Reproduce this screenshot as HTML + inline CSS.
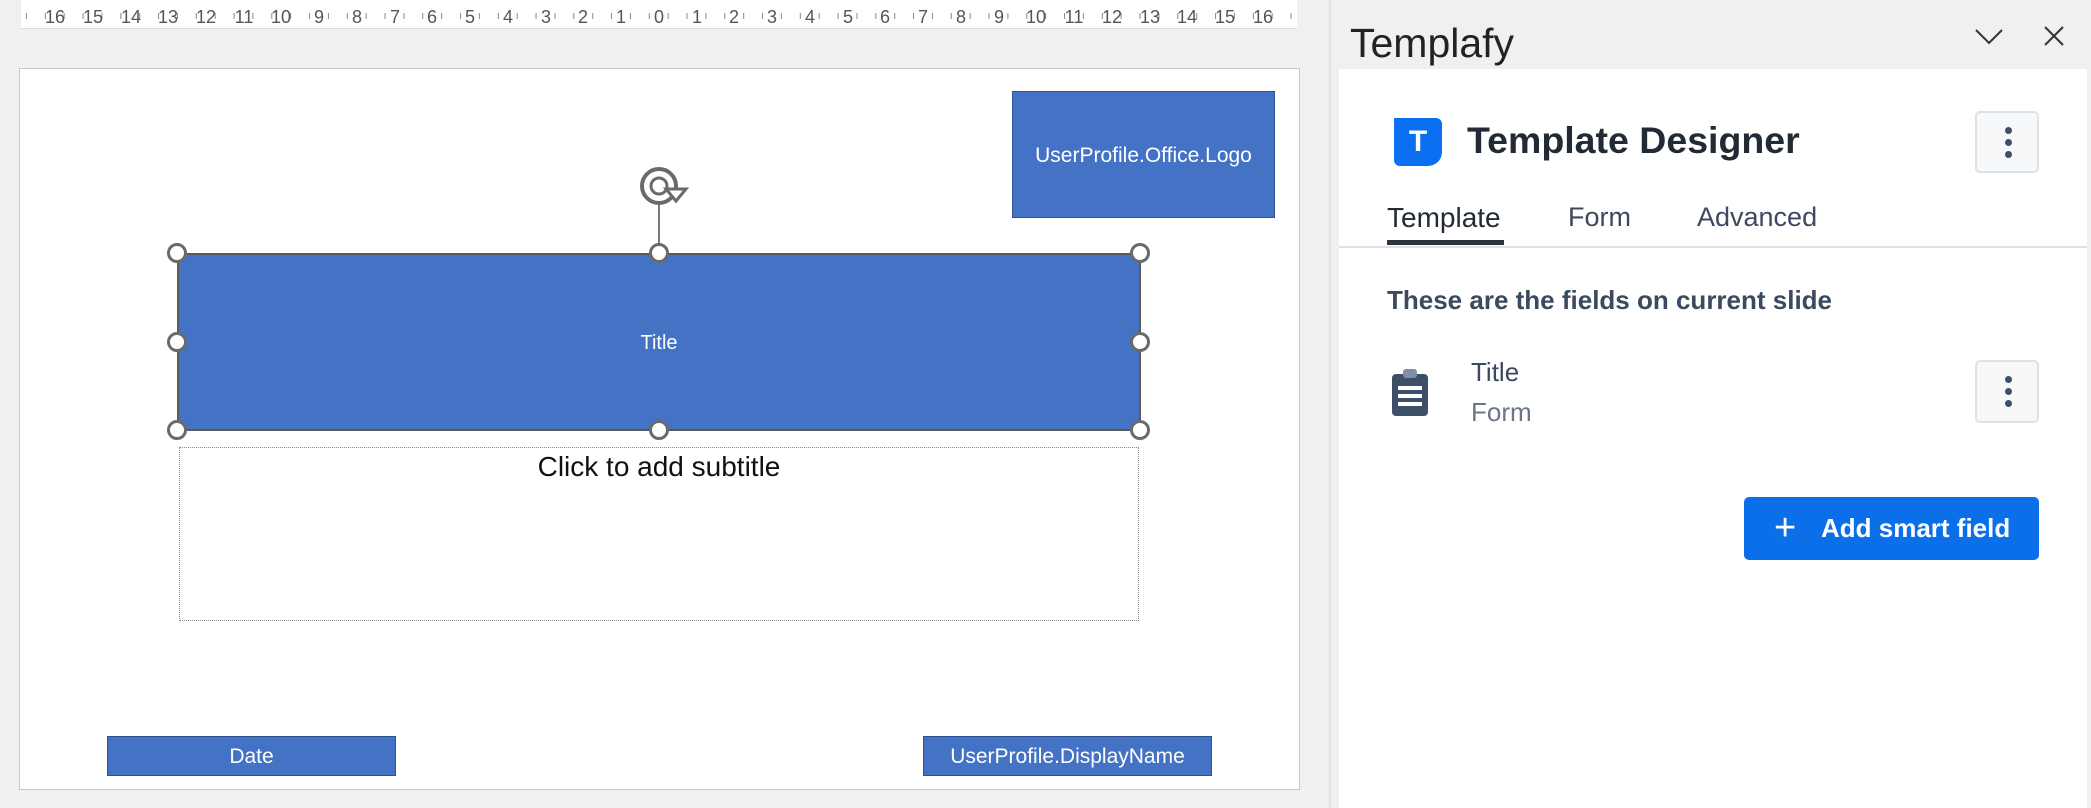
<!DOCTYPE html>
<html><head><meta charset="utf-8"><style>
*{margin:0;padding:0;box-sizing:border-box}
body{width:2091px;height:808px;background:#f0f0f0;position:relative;overflow:hidden;font-family:"Liberation Sans",sans-serif}
.a{position:absolute}
.blue{background:#4472c4;border:1px solid #2f528f;color:#fff;display:flex;align-items:center;justify-content:center;padding-top:2px}
.h{position:absolute;width:20px;height:20px;border:3px solid #6a6a6a;border-radius:50%;background:#fff}
.more{position:absolute;background:#f6f8fa;border:2px solid #dde2e8;border-radius:5px}
.more i{position:absolute;left:28px;width:7px;height:7px;border-radius:50%;background:#3d5068}
</style></head><body>
<svg class="a" style="left:21px;top:0" width="1276" height="30">
<defs><pattern id="tk" x="-4" y="0" width="37.75" height="30" patternUnits="userSpaceOnUse">
<line x1="9.4" y1="13" x2="9.4" y2="19" stroke="#888" stroke-width="1"/>
<line x1="28.3" y1="13" x2="28.3" y2="19" stroke="#888" stroke-width="1"/>
</pattern></defs>
<rect width="1276" height="29" fill="#fff"/>
<rect width="1276" height="29" fill="url(#tk)"/>
<rect x="0" y="28" width="1276" height="1" fill="#ddd"/>
<g font-family="'Liberation Sans Narrow','Liberation Sans',sans-serif" font-size="18" fill="#555" text-anchor="middle">
<text x="34" y="23">16</text><text x="72" y="23">15</text><text x="110" y="23">14</text><text x="147" y="23">13</text><text x="185" y="23">12</text><text x="223" y="23">11</text><text x="260" y="23">10</text><text x="298" y="23">9</text><text x="336" y="23">8</text><text x="374" y="23">7</text><text x="411" y="23">6</text><text x="449" y="23">5</text><text x="487" y="23">4</text><text x="525" y="23">3</text><text x="562" y="23">2</text><text x="600" y="23">1</text><text x="638" y="23">0</text><text x="676" y="23">1</text><text x="713" y="23">2</text><text x="751" y="23">3</text><text x="789" y="23">4</text><text x="827" y="23">5</text><text x="864" y="23">6</text><text x="902" y="23">7</text><text x="940" y="23">8</text><text x="978" y="23">9</text><text x="1015" y="23">10</text><text x="1053" y="23">11</text><text x="1091" y="23">12</text><text x="1129" y="23">13</text><text x="1166" y="23">14</text><text x="1204" y="23">15</text><text x="1242" y="23">16</text>
</g></svg>
<div class="a" style="left:19px;top:68px;width:1281px;height:722px;background:#fff;border:1px solid #c6c6c6"></div>
<div class="a blue" style="left:1012px;top:91px;width:263px;height:127px;font-size:21px">UserProfile.Office.Logo</div>
<div class="a blue" style="left:177px;top:253px;width:964px;height:178px;border:2px solid #5a5a5a;font-size:20px">Title</div>
<div class="a" style="left:179px;top:447px;width:960px;height:174px;border:1px dotted #888;text-align:center;font-size:28px;color:#111;padding-top:3px">Click to add subtitle</div>
<div class="a blue" style="left:107px;top:736px;width:289px;height:40px;font-size:21px">Date</div>
<div class="a blue" style="left:923px;top:736px;width:289px;height:40px;font-size:21px">UserProfile.DisplayName</div>
<div class="a" style="left:658px;top:205px;width:2px;height:48px;background:#777"></div>
<svg class="a" style="left:636px;top:164px" width="56" height="46"><circle cx="23" cy="22" r="17" fill="none" stroke="#6a6a6a" stroke-width="4"/><circle cx="23" cy="22" r="8" fill="none" stroke="#6a6a6a" stroke-width="3"/><path d="M30 25 L50 25 L40 37 Z" fill="#fff" stroke="#6a6a6a" stroke-width="3"/></svg>
<div class="h" style="left:167px;top:243px"></div><div class="h" style="left:649px;top:243px"></div><div class="h" style="left:1130px;top:243px"></div>
<div class="h" style="left:167px;top:332px"></div><div class="h" style="left:1130px;top:332px"></div>
<div class="h" style="left:167px;top:420px"></div><div class="h" style="left:649px;top:420px"></div><div class="h" style="left:1130px;top:420px"></div>
<div class="a" style="left:1329px;top:0;width:2px;height:808px;background:#e2e2e2"></div>
<div class="a" style="left:1350px;top:20px;font-size:41px;color:#222">Templafy</div>
<svg class="a" style="left:1974px;top:26px" width="30" height="22"><path d="M2 4 L15 17 L28 4" fill="none" stroke="#333" stroke-width="2"/></svg>
<svg class="a" style="left:2042px;top:24px" width="24" height="24"><path d="M3 3 L21 21 M21 3 L3 21" stroke="#333" stroke-width="2"/></svg>
<div class="a" style="left:1339px;top:69px;width:748px;height:739px;background:#fff"></div>
<div class="a" style="left:1394px;top:118px;width:48px;height:48px;background:#0a6ff0;border-radius:0 6px 14px 6px;color:#fff;font-weight:bold;font-size:30px;text-align:center;line-height:48px">T</div>
<div class="a" style="left:1467px;top:119px;font-size:37.5px;font-weight:bold;color:#222a35">Template Designer</div>
<div class="more" style="left:1975px;top:111px;width:64px;height:62px"><i style="top:14px"></i><i style="top:26px"></i><i style="top:38px"></i></div>
<div class="a" style="left:1387px;top:202px;font-size:28px;color:#222a35">Template</div>
<div class="a" style="left:1568px;top:202px;font-size:27px;color:#3b4a5e">Form</div>
<div class="a" style="left:1697px;top:202px;font-size:27px;color:#3b4a5e">Advanced</div>
<div class="a" style="left:1387px;top:240px;width:117px;height:5px;background:#2b333e"></div>
<div class="a" style="left:1339px;top:246px;width:748px;height:2px;background:#dde2e8"></div>
<div class="a" style="left:1387px;top:285px;font-size:26px;font-weight:bold;color:#3b4a5e">These are the fields on current slide</div>
<svg class="a" style="left:1391px;top:367px" width="38" height="50"><rect x="1" y="7" width="36" height="42" rx="4" fill="#3d5068"/><rect x="12" y="2" width="14" height="9" rx="3" fill="#7d8ea6"/><rect x="7" y="19" width="24" height="4" fill="#fff"/><rect x="7" y="27" width="24" height="4" fill="#fff"/><rect x="7" y="35" width="24" height="4" fill="#fff"/></svg>
<div class="a" style="left:1471px;top:357px;font-size:26px;color:#3b4a5e">Title</div>
<div class="a" style="left:1471px;top:397px;font-size:26px;color:#6b7785">Form</div>
<div class="more" style="left:1975px;top:360px;width:64px;height:63px"><i style="top:14px"></i><i style="top:26px"></i><i style="top:38px"></i></div>
<div class="a" style="left:1744px;top:497px;width:295px;height:63px;background:#0a6fe8;border-radius:5px;color:#fff;font-weight:bold;font-size:26px;line-height:63px"><span style="position:absolute;left:30px;font-size:38px;font-weight:normal">+</span><span style="position:absolute;left:77px">Add smart field</span></div>
</body></html>
